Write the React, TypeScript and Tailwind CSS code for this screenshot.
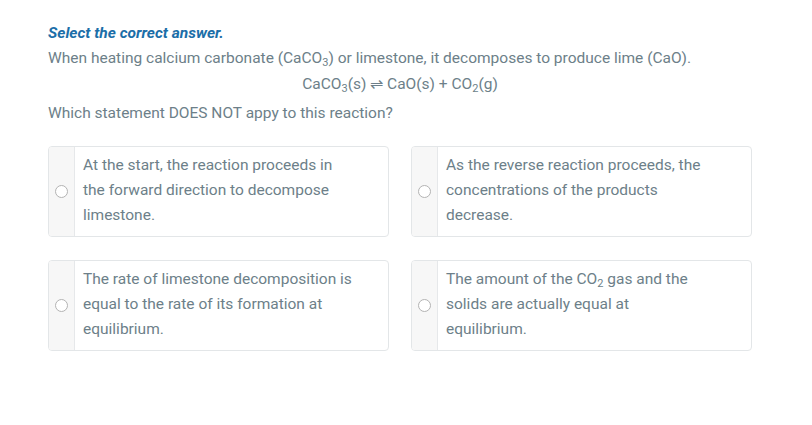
import React from 'react';

const sub = 'text-[11px] leading-none align-[-3px]';

const options: React.ReactNode[][] = [
    ['At the start, the reaction proceeds in', 'the forward direction to decompose', 'limestone.'],
    ['As the reverse reaction proceeds, the', 'concentrations of the products', 'decrease.'],
    ['The rate of limestone decomposition is', 'equal to the rate of its formation at', 'equilibrium.'],
    [<>The amount of the CO<span className={sub}>2</span> gas and the</>, 'solids are actually equal at', 'equilibrium.'],
];

function Option({ lines }: { lines: React.ReactNode[] }) {
    return (
        <div className="flex bg-white border border-[#e3e6e8] rounded-[4px] h-[91px] overflow-hidden">
            <div className="w-[26px] shrink-0 bg-[#f7f7f7] border-r border-[#e6e8ea] flex items-center justify-center">
                <span className="block w-[13px] h-[13px] rounded-full border border-[#b3b3b3] bg-white" />
            </div>
            <div className="flex flex-col pl-[8px] pt-[6px] text-[15.5px] leading-[25px] text-[#6d7f89]">
                {lines.map((l, i) => (
                    <span key={i} className="whitespace-nowrap">{l}</span>
                ))}
            </div>
        </div>
    );
}

export default function App() {
    return (
        <div className="w-full h-[425px] bg-white pl-[48px] pr-[60px] pt-[21px]" style={{ fontFamily: 'Roboto, "Liberation Sans", sans-serif' }}>
            <p className="text-[15.5px] leading-[25px] font-bold italic text-[#1b6ea8]">Select the correct answer.</p>
            <p className="text-[15.5px] leading-[25px] text-[#6d7f89]">
                When heating calcium carbonate (CaCO<span className={sub}>3</span>) or limestone, it decomposes to produce lime (CaO).
            </p>
            <p className="text-[15.5px] leading-[27px] text-[#6d7f89] text-center">
                CaCO<span className={sub}>3</span>(s) ⇌ CaO(s) + CO<span className={sub}>2</span>(g)
            </p>
            <p className="text-[15.5px] leading-[30px] text-[#6d7f89]">Which statement DOES NOT appy to this reaction?</p>
            <div className="grid grid-cols-2 gap-x-[22px] gap-y-[23px] mt-[18px]">
                {options.map((o, i) => (
                    <Option key={i} lines={o} />
                ))}
            </div>
        </div>
    );
}
